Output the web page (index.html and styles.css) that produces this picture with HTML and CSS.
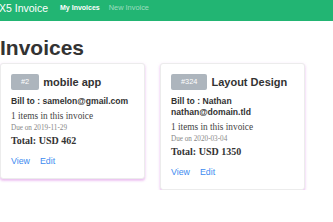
FILE: index.html
```html
<!DOCTYPE html>
<html lang="en">
<head>
    <meta charset="UTF-8">
    <title>Invoices</title>
    <link rel="stylesheet" href="styles.css">
</head>
<body>

<div class="navbar">
    <span class="brand">X5 Invoice</span>
    <a class="nav-link active" href="#">My Invoices</a>
    <a class="nav-link" href="#">New Invoice</a>
</div>

<div class="page">
    <h1>Invoices</h1>

    <div class="invoice-list">
        <div class="card">
            <div class="card-head">
                <span class="badge">#2</span>
                <span class="card-title">mobile app</span>
            </div>
            <div class="bill-to">Bill to : samelon@gmail.com</div>
            <div class="items">1 items in this invoice</div>
            <div class="due">Due on 2019-11-29</div>
            <div class="total">Total: USD 462</div>
            <div class="actions">
                <a href="#">View</a>
                <a href="#">Edit</a>
            </div>
        </div>

        <div class="card">
            <div class="card-head">
                <span class="badge">#324</span>
                <span class="card-title">Layout Design</span>
            </div>
            <div class="bill-to">Bill to : Nathan nathan@domain.tld</div>
            <div class="items">1 items in this invoice</div>
            <div class="due">Due on 2020-03-04</div>
            <div class="total">Total: USD 1350</div>
            <div class="actions">
                <a href="#">View</a>
                <a href="#">Edit</a>
            </div>
        </div>
    </div>
</div>

</body>
</html>
```

FILE: styles.css
```css
body {
    margin: 0;
    font-family: "Liberation Sans", Arial, sans-serif;
    background-color: #fff;
    color: #333;
}

.navbar {
    height: 21px;
    background-color: #22b573;
    display: flex;
    align-items: flex-start;
    padding-top: 2px;
    box-sizing: border-box;
}

.brand {
    color: #fff;
    font-size: 10.5px;
    line-height: 12px;
    margin-left: -1px;
    margin-right: 12px;
}

.nav-link {
    color: rgba(255, 255, 255, 0.55);
    font-size: 7.4px;
    line-height: 12px;
    text-decoration: none;
    margin-right: 9px;
}

.nav-link.active {
    color: #fff;
    font-weight: bold;
    font-size: 7px;
}

.page {
    padding: 0;
}

h1 {
    font-size: 21px;
    line-height: 24px;
    margin: 15px 0 3px 0;
    color: #333;
}

.invoice-list {
    display: flex;
    align-items: flex-start;
    gap: 15px;
}

.card {
    width: 145px;
    box-sizing: border-box;
    padding: 10px 10px 11px 10px;
    border: 1px solid #ececec;
    border-radius: 3px;
    background-color: #fff;
    box-shadow: 0 1px 3px rgba(215, 130, 225, 0.35), 0 2px 2px rgba(230, 170, 235, 0.45);
}

.card-head {
    display: flex;
    align-items: center;
    gap: 4px;
    height: 16px;
}

.badge {
    background-color: #adb5bd;
    color: #fff;
    font-size: 7.4px;
    height: 16px;
    line-height: 16px;
    padding: 0 10px;
    border-radius: 2px;
}

.card-title {
    font-size: 11px;
    font-weight: bold;
    color: #333;
}

.bill-to {
    margin-top: 6px;
    font-size: 8.6px;
    line-height: 11px;
    font-weight: bold;
    color: #333;
}

.items {
    margin-top: 3px;
    font-family: "Liberation Serif", "Times New Roman", serif;
    font-size: 9.3px;
    line-height: 12px;
    color: #444;
}

.due {
    margin-top: 2px;
    font-family: "Liberation Serif", "Times New Roman", serif;
    font-size: 7.2px;
    line-height: 9px;
    color: #888;
}

.total {
    margin-top: 1.5px;
    font-family: "Liberation Serif", "Times New Roman", serif;
    font-size: 10px;
    line-height: 12px;
    font-weight: bold;
    color: #333;
}

.actions {
    margin-top: 9.5px;
    display: flex;
    gap: 10px;
    font-size: 8.8px;
    line-height: 11px;
}

.actions a {
    color: #3d8bf0;
    text-decoration: none;
}
```
